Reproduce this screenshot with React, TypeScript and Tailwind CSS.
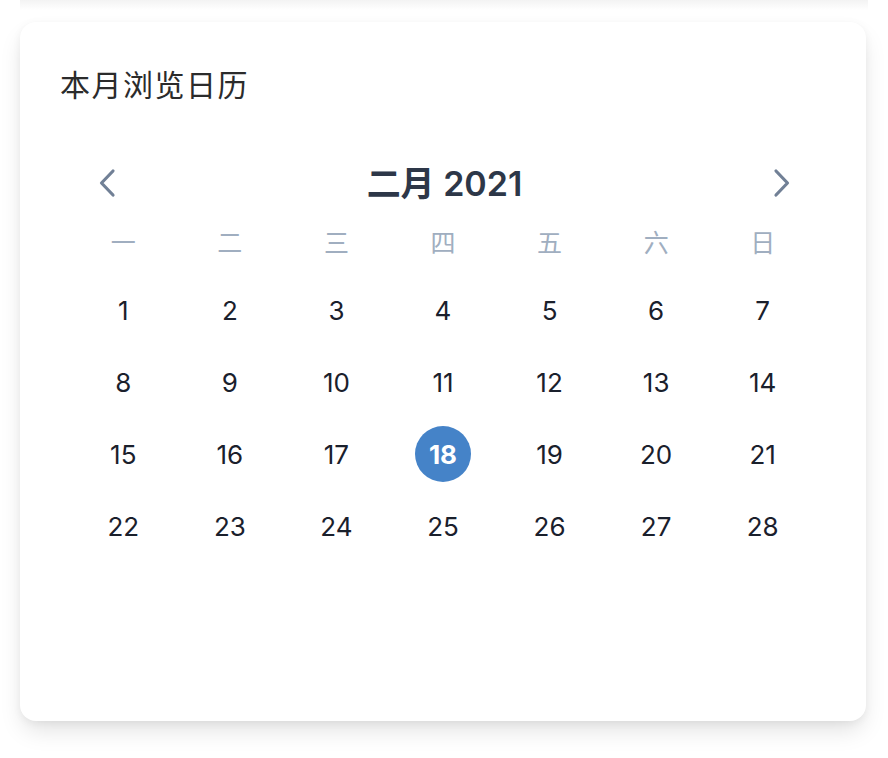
import React from "react";

const weekDays = ["一", "二", "三", "四", "五", "六", "日"];
const days = Array.from({ length: 28 }, (_, i) => i + 1);
const today = 18;

const Chevron = ({ dir }: { dir: "left" | "right" }) => (
  <svg width="20" height="30" viewBox="0 0 20 30" fill="none">
    <path
      d={dir === "left" ? "M15 3 L3.5 15 L15 27" : "M5 3 L16.5 15 L5 27"}
      stroke="#718096"
      strokeWidth="3.2"
      strokeLinecap="round"
      strokeLinejoin="round"
    />
  </svg>
);

const App: React.FC = () => {
  return (
    <div
      className="min-h-[758px] w-[888px] bg-white"
      style={{ fontFamily: "Inter, 'Noto Sans CJK SC', sans-serif" }}
    >
      {/* shadow left by the card above */}
      <div className="mx-[20px] h-[10px] bg-gradient-to-b from-[#f3f3f3] to-white" />
      <div className="ml-[20px] mt-[12px] h-[699px] w-[846px] rounded-2xl bg-white px-10 pt-[43px] shadow-[0_12px_24px_-4px_rgba(0,0,0,0.13),0_2px_8px_rgba(0,0,0,0.05)]">
        <h2 className="h-[40px] text-[30px] leading-[40px] tracking-[1.5px] text-[#2b2b2b]">
          本月浏览日历
        </h2>

        <div className="px-[10px]">
          <div className="mt-[50px] flex h-[56px] items-center justify-between pl-[28px] pr-[25px]">
            <button className="flex items-center">
              <Chevron dir="left" />
            </button>
            <span className="text-[34px] font-semibold text-[#2d3748]">二月 2021</span>
            <button className="flex items-center">
              <Chevron dir="right" />
            </button>
          </div>

          <div className="mt-[13px] grid h-[40px] grid-cols-7 items-center text-center text-[25px] text-[#a0aec0]">
            {weekDays.map((d) => (
              <span key={d}>{d}</span>
            ))}
          </div>

          <div className="mt-[10px] grid grid-cols-7">
            {days.map((d) => (
              <div key={d} className="flex h-[72px] items-center justify-center">
                {d === today ? (
                  <span className="flex h-[56px] w-[56px] items-center justify-center rounded-full bg-[#4583c8] text-[26px] font-bold text-white">
                    {d}
                  </span>
                ) : (
                  <span className="text-[26px] text-[#1a202c]">{d}</span>
                )}
              </div>
            ))}
          </div>
        </div>
      </div>
    </div>
  );
};

export default App;
